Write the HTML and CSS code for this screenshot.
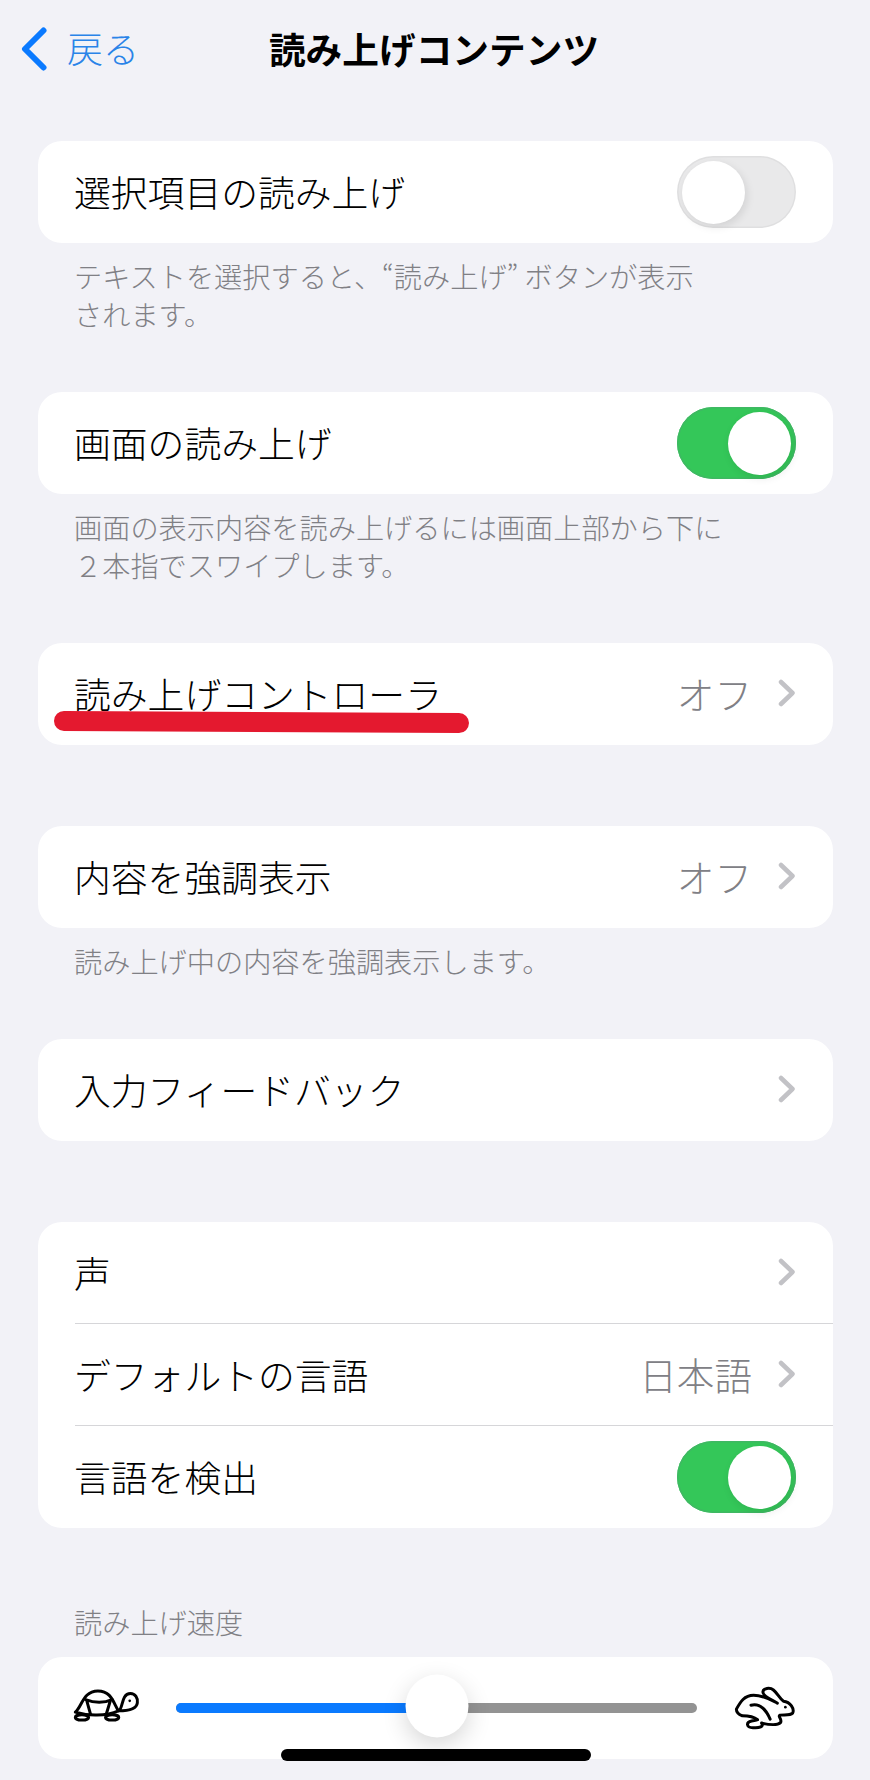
FILE: index.html
```html
<!DOCTYPE html>
<html lang="ja">
<head>
<meta charset="utf-8">
<title>読み上げコンテンツ</title>
<link rel="stylesheet" href="styles.css">
</head>
<body>
<div class="page">
  <header class="nav">
    <div class="back">
      <svg class="back-icon" viewBox="0 0 26 44"><path d="M22.5 3.5 4 22l18.500 18.500"/></svg>
      <span>戻る</span>
    </div>
    <h1 class="title">読み上げコンテンツ</h1>
  </header>

  <section class="card first">
    <div class="row"><span class="label">選択項目の読み上げ</span><span class="toggle"></span></div>
  </section>
  <p class="foot">テキストを選択すると、“読み上げ” ボタンが表示<br>されます。</p>

  <section class="card gap">
    <div class="row"><span class="label">画面の読み上げ</span><span class="toggle on"></span></div>
  </section>
  <p class="foot">画面の表示内容を読み上げるには画面上部から下に<br>２本指でスワイプします。</p>

  <section class="card gap marked">
    <div class="row"><span class="label">読み上げコントローラ</span><span class="value">オフ</span><svg class="chev" viewBox="0 0 18 28"><path d="M3 3l11.500 11L3 25"/></svg></div>
    <div class="mark"></div>
  </section>

  <section class="card gap-lg">
    <div class="row"><span class="label">内容を強調表示</span><span class="value">オフ</span><svg class="chev" viewBox="0 0 18 28"><path d="M3 3l11.500 11L3 25"/></svg></div>
  </section>
  <p class="foot">読み上げ中の内容を強調表示します。</p>

  <section class="card gap">
    <div class="row"><span class="label">入力フィードバック</span><svg class="chev" viewBox="0 0 18 28"><path d="M3 3l11.500 11L3 25"/></svg></div>
  </section>

  <section class="card gap-lg">
    <div class="row sep"><span class="label">声</span><svg class="chev" viewBox="0 0 18 28"><path d="M3 3l11.500 11L3 25"/></svg></div>
    <div class="row sep"><span class="label">デフォルトの言語</span><span class="value">日本語</span><svg class="chev" viewBox="0 0 18 28"><path d="M3 3l11.500 11L3 25"/></svg></div>
    <div class="row"><span class="label">言語を検出</span><span class="toggle on"></span></div>
  </section>

  <p class="head">読み上げ速度</p>
  <section class="card">
    <div class="row slider">
      <svg class="turtle" viewBox="70 84 202 104">
        <path d="M77 156C97 140 100 92 145 92C187 92 192 130 207 152C170 168 115 168 77 156Z"/>
        <path d="M108 118Q150 134 188 118M111 120L123 163M183 120L170 163"/>
        <path d="M207 152C222 148 214 100 243 100C258 100 266 114 264 128C262 146 240 152 207 152Z"/>
        <ellipse cx="97" cy="172" rx="20" ry="8"/>
        <ellipse cx="188" cy="172" rx="20" ry="8"/>
        <circle class="dot" cx="241" cy="122" r="4"/>
      </svg>
      <div class="track">
        <div class="fill" style="width:50%"></div>
        <div class="thumb" style="left:50%"></div>
      </div>
      <svg class="rabbit" viewBox="42 72 188 136">
        <path d="M48 142C60 120 72 100 100 100C130 100 152 114 172 124C160 116 128 104 128 90C128 78 150 76 160 84C172 94 178 108 190 118C212 120 224 142 218 154C210 162 192 158 180 160C172 164 186 170 182 182C172 192 150 190 124 184C132 194 118 200 98 198C78 198 76 182 94 178C104 176 108 176 112 174C100 164 78 162 66 162C56 158 48 152 48 142Z"/>
        <path d="M92 130C116 124 136 140 150 172"/>
        <circle class="dot" cx="196" cy="136" r="4"/>
      </svg>
    </div>
  </section>

  <div class="home"></div>
</div>
</body>
</html>
```
FILE: styles.css
```css
* { box-sizing: border-box; }
html, body { margin: 0; padding: 0; }
body {
  background: #f2f2f7;
  font-family: "Noto Sans CJK JP", "Noto Sans", sans-serif;
  color: #000;
}
.page {
  position: relative;
  width: 870px;
  height: 1780px;
  overflow: hidden;
  background: #f2f2f7;
}
.nav {
  position: relative;
  height: 96px;
  display: flex;
  align-items: center;
  justify-content: center;
}
.back {
  position: absolute;
  left: 21px;
  top: 27px;
  height: 44px;
  display: flex;
  align-items: center;
  gap: 20px;
  color: #2a84e8;
  font-size: 36px;
  line-height: 40px;
  font-weight: 300;
}
.back span { margin-bottom: 4px; }
.back-icon { width: 26px; height: 44px; flex: none; }
.back-icon path {
  fill: none;
  stroke: #0a7aff;
  stroke-width: 6;
  stroke-linecap: round;
  stroke-linejoin: round;
}
.title {
  margin: 0 0 0 -2px;
  font-size: 36.7px;
  line-height: 44px;
  font-weight: 700;
}
.card {
  position: relative;
  margin: 0 37px 0 38px;
  background: #fff;
  border-radius: 24px;
}
.first { margin-top: 45px; }
.gap { margin-top: 59px; }
.gap-lg { margin-top: 81px; }
.row {
  position: relative;
  height: 102px;
  padding: 0 37px 0 37px;
  display: flex;
  align-items: center;
}
.row.sep::after {
  content: "";
  position: absolute;
  left: 37px;
  right: 0;
  bottom: 0;
  height: 1.5px;
  background: #d6d6d9;
}
.label {
  flex: 1;
  margin: 0 0 3px -1px;
  font-size: 36.8px;
  line-height: 44px;
  font-weight: 300;
  white-space: nowrap;
}
.value {
  margin: 0 26px 3px 0;
  font-size: 37.6px;
  line-height: 44px;
  font-weight: 300;
  color: #808085;
}
.chev { width: 18px; height: 28px; flex: none; margin: 0 0 2px 0; }
.chev path {
  fill: none;
  stroke: #c2c2c6;
  stroke-width: 4.500;
  stroke-linecap: round;
  stroke-linejoin: round;
}
.foot, .head {
  margin: 0;
  padding-left: 74px;
  font-size: 28.2px;
  line-height: 38px;
  font-weight: 300;
  color: #808085;
}
.foot { margin-top: 14px; }
.head { margin: 75px 0 16px; }
.toggle {
  position: relative;
  flex: none;
  width: 119px;
  height: 72px;
  border-radius: 36px;
  background: #e9e9ea;
  box-shadow: inset 0 0 0 1.500px rgba(0, 0, 0, 0.04);
}
.toggle::after {
  content: "";
  position: absolute;
  left: 5px;
  top: 4.500px;
  width: 63px;
  height: 63px;
  border-radius: 50%;
  background: #fff;
  box-shadow: 2px 3px 8px rgba(0, 0, 0, 0.1);
}
.toggle.on { background: #34c759; box-shadow: inset 0 0 0 1.500px #3fb863; }
.toggle.on::after { left: 51px; }
.mark {
  position: absolute;
  left: 16px;
  top: 69px;
  width: 415px;
  height: 20px;
  border-radius: 10px;
  background: #e4192f;
  transform: rotate(0.3deg);
}
.turtle { width: 67px; height: 35px; flex: none; margin: 0 36px 6px -2px; }
.rabbit { width: 63px; height: 45px; flex: none; margin: 0 -1px 0 37px; }
.turtle path, .turtle ellipse, .rabbit path {
  fill: none;
  stroke: #000;
  stroke-width: 9;
  stroke-linejoin: round;
  stroke-linecap: round;
}
.dot { fill: #000; }
.track {
  position: relative;
  flex: 1;
  height: 10px;
  border-radius: 5px;
  background: #939393;
}
.fill {
  height: 100%;
  border-radius: 5px 0 0 5px;
  background: #0a7aff;
}
.thumb {
  position: absolute;
  top: 50%;
  width: 63px;
  height: 63px;
  margin-top: -2px;
  border-radius: 50%;
  background: #fff;
  transform: translate(-50%, -50%);
  box-shadow: 0 8px 24px rgba(0, 0, 0, 0.16);
}
.home {
  position: absolute;
  left: 281px;
  top: 1749px;
  width: 310px;
  height: 12px;
  border-radius: 6px;
  background: #000;
}
```
